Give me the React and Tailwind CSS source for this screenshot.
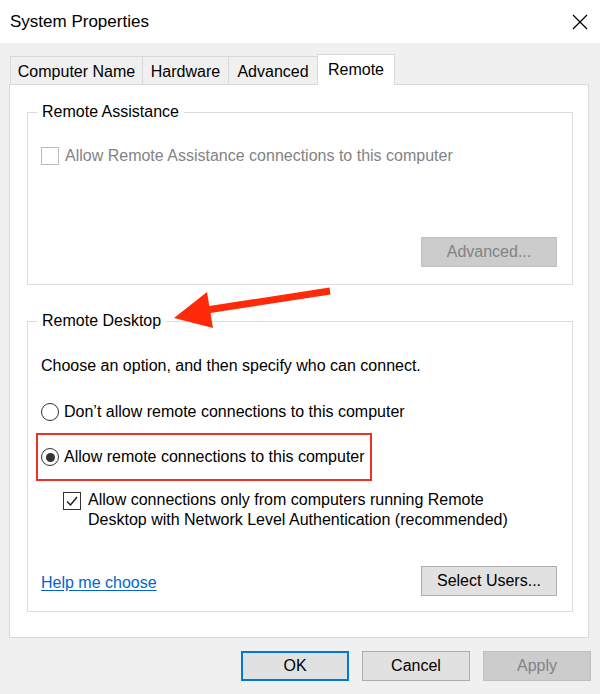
import React from "react";

function Tab({ label, w, selected }) {
  if (selected) {
    return (
      <div
        className={`relative z-10 -mb-px -ml-px flex h-[31px] items-start justify-center border border-b-0 border-[#d9d9d9] bg-white pt-[5px] leading-[20px] ${w}`}
      >
        {label}
      </div>
    );
  }
  return (
    <div
      className={`-ml-px flex h-[28px] items-start justify-center border border-b-0 border-[#d9d9d9] bg-[#f0f0f0] pt-[5px] leading-[20px] first:ml-0 ${w}`}
    >
      {label}
    </div>
  );
}

function Radio({ checked }) {
  return (
    <div className="flex h-[18px] w-[18px] shrink-0 items-center justify-center rounded-full border border-[#333333] bg-white">
      {checked && <div className="h-[9px] w-[9px] rounded-full bg-[#333333]" />}
    </div>
  );
}

function Button({ children, className = "", disabled, primary }) {
  const base = "flex h-[30px] items-center justify-center leading-[20px]";
  if (disabled) {
    return (
      <div className={`${base} border border-[#bfbfbf] bg-[#cccccc] text-[#838383] ${className}`}>
        {children}
      </div>
    );
  }
  if (primary) {
    return (
      <div className={`${base} border-2 border-[#0078d7] bg-[#e1e1e1] text-black ${className}`}>
        {children}
      </div>
    );
  }
  return (
    <div className={`${base} border border-[#adadad] bg-[#e1e1e1] text-black ${className}`}>
      {children}
    </div>
  );
}

export default function App() {
  return (
    <div
      className="relative h-[694px] w-[600px] overflow-hidden bg-[#f0f0f0] text-[16px] text-black"
      style={{ fontFamily: '"Liberation Sans", Arial, sans-serif' }}
    >
      {/* Title bar */}
      <div className="flex h-[43px] items-center justify-between bg-white pl-[10px] pr-[12px]">
        <span className="text-[17px] leading-[22px]">System Properties</span>
        <svg width="16" height="16" viewBox="0 0 16 16" className="block">
          <path d="M1 1 L15 15 M15 1 L1 15" stroke="#000" strokeWidth="1.3" fill="none" />
        </svg>
      </div>

      {/* Body */}
      <div className="px-[9px] pt-[11px]">
        {/* Tabs */}
        <div className="flex h-[30px] items-end pl-[1px]">
          <Tab label="Computer Name" w="w-[133px]" />
          <Tab label="Hardware" w="w-[87px]" />
          <Tab label="Advanced" w="w-[90px]" />
          <Tab label="Remote" w="w-[78px]" selected />
        </div>

        {/* Panel */}
        <div className="h-[554px] w-[580px] border border-[#d9d9d9] bg-white pt-[27px]">
          {/* Remote Assistance group */}
          <div className="relative ml-[17px] flex h-[173px] w-[546px] flex-col justify-between border border-[#dcdcdc] pb-[17px] pl-[13px] pr-[15px] pt-[33px]">
            <span className="absolute -top-[11px] left-[9px] bg-white px-[5px] leading-[20px]">
              Remote Assistance
            </span>
            <div className="flex items-center gap-[6px]">
              <div className="h-[18px] w-[18px] shrink-0 border border-[#bcbcbc] bg-white" />
              <span className="leading-[20px] text-[#838383]">
                Allow Remote Assistance connections to this computer
              </span>
            </div>
            <div className="flex justify-end">
              <Button disabled className="w-[136px]">
                Advanced...
              </Button>
            </div>
          </div>

          {/* Remote Desktop group */}
          <div className="relative ml-[17px] mt-[36px] flex h-[291px] w-[546px] flex-col border border-[#dcdcdc] pl-[13px] pr-[15px] pt-[34px]">
            <span className="absolute -top-[11px] left-[9px] bg-white px-[5px] leading-[20px]">
              Remote Desktop
            </span>
            <div className="leading-[20px]">Choose an option, and then specify who can connect.</div>

            <div className="mt-[26px] flex items-center gap-[5px]">
              <Radio />
              <span className="leading-[20px]">Don’t allow remote connections to this computer</span>
            </div>

            <div className="-ml-[5px] mt-[11px] flex h-[48px] w-[336px] items-center gap-[5px] border-2 border-[#ee3124] pl-[3px]">
              <Radio checked />
              <span className="leading-[20px]">Allow remote connections to this computer</span>
            </div>

            <div className="ml-[22px] mt-[9px] flex items-start gap-[7px]">
              <div className="mt-[2px] flex h-[18px] w-[18px] shrink-0 items-center justify-center border border-[#333333] bg-white">
                <svg width="14" height="14" viewBox="0 0 14 14">
                  <path d="M2 7.5 L5.5 11 L12 3" stroke="#222" strokeWidth="1.5" fill="none" />
                </svg>
              </div>
              <div className="leading-[20px]">
                Allow connections only from computers running Remote
                <br />
                Desktop with Network Level Authentication (recommended)
              </div>
            </div>

            <div className="mt-[36px] flex items-center justify-between">
              <span className="pt-[4px] leading-[20px] text-[#0066cc] underline underline-offset-[2px]">
                Help me choose
              </span>
              <Button className="w-[136px]">Select Users...</Button>
            </div>
          </div>
        </div>

        {/* Dialog buttons */}
        <div className="mt-[13px] flex justify-end gap-[13px]">
          <Button primary className="w-[108px]">
            OK
          </Button>
          <Button className="w-[108px]">Cancel</Button>
          <Button disabled className="w-[108px]">
            Apply
          </Button>
        </div>
      </div>

      {/* Red annotation arrow */}
      <svg
        className="pointer-events-none absolute left-0 top-0"
        width="600"
        height="694"
        viewBox="0 0 600 694"
      >
        <line x1="330" y1="291" x2="200" y2="311" stroke="#ff2a0a" strokeWidth="7" strokeLinecap="butt" />
        <polygon points="174,318 207,292 213,328" fill="#ff2a0a" />
      </svg>
    </div>
  );
}
